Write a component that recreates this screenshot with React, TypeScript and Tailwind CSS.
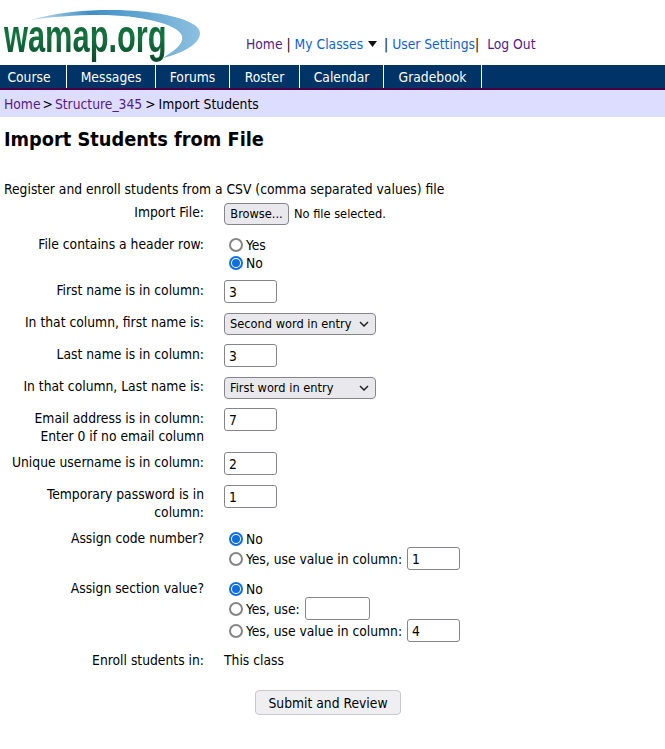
const font = "[font-family:'DejaVu_Sans_Condensed','DejaVu_Sans',sans-serif] [font-stretch:condensed]";

function Radio({ checked }: { checked?: boolean }) {
  return (
    <span
      className={
        checked
          ? "ml-[5px] mr-[3px] inline-flex h-[14px] w-[14px] shrink-0 items-center justify-center rounded-full border-2 border-[#0f6fe0] bg-white"
          : "ml-[5px] mr-[3px] inline-block h-[14px] w-[14px] shrink-0 rounded-full border-2 border-[#858585] bg-white"
      }
    >
      {checked && <span className="block h-[8px] w-[8px] rounded-full bg-[#0f6fe0]" />}
    </span>
  );
}

function Input({ value, className = "w-[53px]" }: { value?: string; className?: string }) {
  return (
    <span className={`flex h-[23px] ${className} items-center rounded-[3px] border border-[#85858f] bg-white px-[4px]`}>
      {value}
    </span>
  );
}

function Select({ value }: { value: string }) {
  return (
    <span className="flex h-[22px] w-[152px] items-center justify-between whitespace-nowrap rounded-[4px] border border-[#85858f] bg-[#e9e9ed] pl-[5px] pr-[6px] text-[12.7px]">
      {value}
      <svg width="10" height="6" viewBox="0 0 10 6" fill="none" stroke="#222" strokeWidth="1.5">
        <path d="M1 1l4 4 4-4" />
      </svg>
    </span>
  );
}

function Row({
  label,
  children,
  className = "",
  labelClass = "",
}: {
  label: React.ReactNode;
  children: React.ReactNode;
  className?: string;
  labelClass?: string;
}) {
  return (
    <div className={`flex ${className}`}>
      <div className={`w-[200px] shrink-0 text-right ${labelClass}`}>{label}</div>
      <div className="ml-[20px] flex-1">{children}</div>
    </div>
  );
}

const tabs = ["Course", "Messages", "Forums", "Roster", "Calendar", "Gradebook"];
const tabW = ["w-[67px] pr-[8px]", "w-[89px]", "w-[74px]", "w-[70px]", "w-[84px]", "w-[98px]"];

export default function App() {
  return (
    <div className={`${font} h-[749px] w-[665px] overflow-hidden bg-white text-[13.75px] leading-[18px] text-black`}>
      {/* header */}
      <div className="flex h-[65px]">
        <div className="relative h-[65px] w-[246px] shrink-0">
          <svg className="absolute left-0 top-0" width="205" height="62" viewBox="0 0 205 62">
            <defs>
              <linearGradient id="sw" x1="0" x2="1" y1="0" y2="0">
                <stop offset="0" stopColor="#cfe3f1" />
                <stop offset="0.35" stopColor="#3f8fc5" />
                <stop offset="1" stopColor="#8cc0e0" />
              </linearGradient>
            </defs>
            <path d="M30 20C60 12 85 10 110 10c50 0 90 10 90 23 0 12-20 21-37 25 12-8 21-14 19-22C178 24 140 15 100 15c-25 0-50 2-70 5z" fill="url(#sw)" />
          </svg>
          <span className="absolute left-[4px] top-[10px] origin-left scale-x-[0.67] bg-gradient-to-b from-[#0b5230] via-[#16743f] to-[#0a4a2c] bg-clip-text text-[46px] leading-[52px] font-bold text-transparent [font-family:'Liberation_Sans',sans-serif] [font-stretch:normal]">
            wamap.org
          </span>
        </div>
        <div className="flex h-[54px] items-start whitespace-pre pt-[35px]">
          <a className="text-[#551a8b]">Home</a>
          <span> | </span>
          <a className="text-[#0f62d6]">My Classes</a>
          <svg className="ml-[5px] mr-[3px] mt-[6px]" width="9" height="6" viewBox="0 0 9 6"><path d="M0 0h9L4.5 6z" fill="#111" /></svg>
          <span> | </span>
          <a className="text-[#0f62d6]">User Settings</a>
          <span>| </span>
          <a className="ml-[4px] text-[#551a8b]">Log Out</a>
        </div>
      </div>

      {/* nav */}
      <div className="flex h-[25px] border-b-2 border-[#4a0045] bg-[#003366] text-white">
        {tabs.map((t, i) => (
          <div key={t} className={`${tabW[i]} flex h-[23px] items-center justify-center border-r border-white`}>
            {t}
          </div>
        ))}
      </div>

      {/* breadcrumb */}
      <div className="flex h-[27px] items-center bg-[#ddddff] pl-[4px]">
        <a className="text-[#551a8b]">Home</a>
        <span className="mx-[2px]">&gt;</span>
        <a className="text-[#551a8b]">Structure_345</a>
        <span className="mx-[3px]">&gt;</span>
        <span>Import Students</span>
      </div>

      <div className="px-[4px]">
        <h1 className="mt-[9px] text-[19.75px] leading-[28px] font-bold">Import Students from File</h1>
        <p className="mt-[26px]">Register and enroll students from a CSV (comma separated values) file</p>

        <Row className="mt-[4px]" labelClass="pt-[1px]" label="Import File:">
          <div className="mt-[1px] flex items-center text-[12.7px]">
            <span className="flex h-[22px] w-[65px] items-center justify-center rounded-[4px] border border-[#85858f] bg-[#e9e9ed]">Browse...</span>
            <span className="ml-[5px]">No file selected.</span>
          </div>
        </Row>
        <Row className="mt-[10px]" label="File contains a header row:">
          <div className="mt-[1px] flex items-center"><Radio />Yes</div>
          <div className="flex items-center"><Radio checked />No</div>
        </Row>
        <Row className="mt-[8px]" labelClass="pt-[1px]" label="First name is in column:"><Input value="3" /></Row>
        <Row className="mt-[10px]" label="In that column, first name is:"><Select value="Second word in entry" /></Row>
        <Row className="mt-[9px]" labelClass="pt-[1px]" label="Last name is in column:"><Input value="3" /></Row>
        <Row className="mt-[10px]" label="In that column, Last name is:"><Select value="First word in entry" /></Row>
        <Row className="mt-[9px]" labelClass="pt-[1px]" label={<>Email address is in column:<br />Enter 0 if no email column</>}><Input value="7" /></Row>
        <Row className="mt-[7px]" labelClass="pt-[1px]" label="Unique username is in column:"><Input value="2" /></Row>
        <Row className="mt-[10px]" label={<>Temporary password is in<br />column:</>}><Input value="1" /></Row>
        <Row className="mt-[8px]" label="Assign code number?">
          <div className="mt-[1px] flex h-[17px] items-center"><Radio checked />No</div>
          <div className="flex items-center"><Radio />Yes, use value in column:<Input className="ml-[5px] w-[53px]" value="1" /></div>
        </Row>
        <Row className="mt-[9px]" label="Assign section value?">
          <div className="mt-[1px] flex h-[17px] items-center"><Radio checked />No</div>
          <div className="flex items-center"><Radio />Yes, use:<Input className="ml-[5px] w-[65px]" /></div>
          <div className="-mt-[1px] flex items-center"><Radio />Yes, use value in column:<Input className="ml-[5px] w-[53px]" value="4" /></div>
        </Row>
        <Row className="mt-[9px]" label="Enroll students in:">This class</Row>
        <div className="mt-[21px] flex justify-center pr-[9px]">
          <span className="flex h-[25px] w-[146px] items-center justify-center rounded-[4px] border border-[#c9c9cf] bg-[#efeff1]">Submit and Review</span>
        </div>
      </div>
    </div>
  );
}
